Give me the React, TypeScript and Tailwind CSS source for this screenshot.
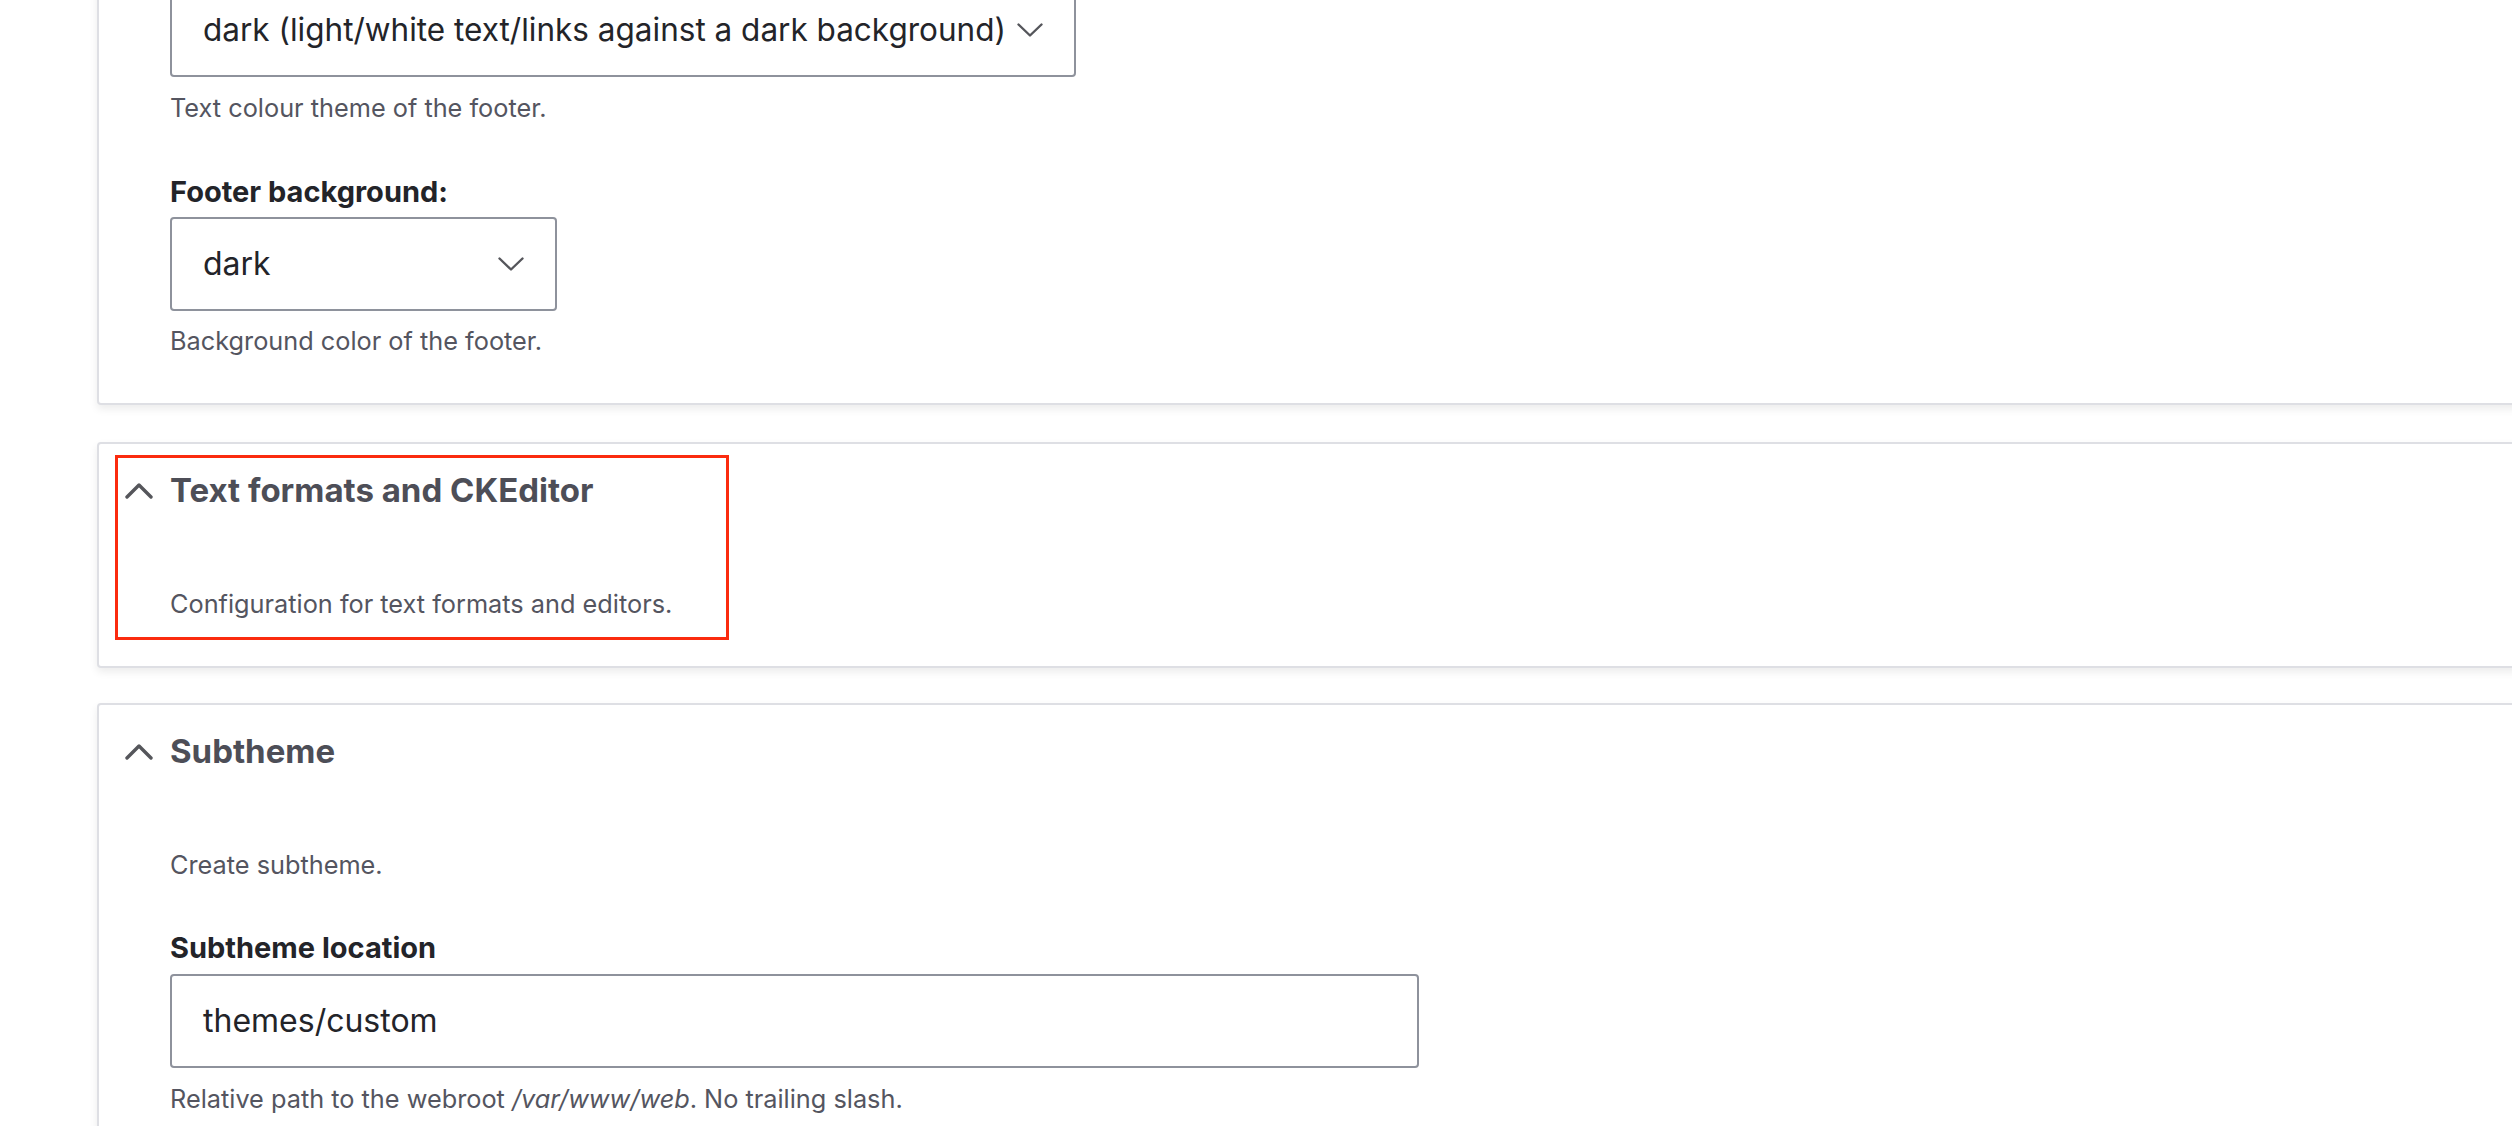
import React from "react";

const font = { fontFamily: "Inter, 'Noto Sans', sans-serif" };

function ChevronDown() {
  return (
    <svg width="26" height="14" viewBox="0 0 26 14" fill="none" className="shrink-0">
      <path d="M1.5 1.5 L13 12.5 L24.5 1.5" stroke="#55565b" strokeWidth="2.4" strokeLinecap="round" strokeLinejoin="round" />
    </svg>
  );
}

function ChevronUp() {
  return (
    <svg width="28" height="17" viewBox="0 0 28 17" fill="none" className="shrink-0">
      <path d="M2 15 L14 3 L26 15" stroke="#55565b" strokeWidth="3.4" strokeLinecap="round" strokeLinejoin="round" />
    </svg>
  );
}

function Select({ value, width, size }: { value: string; width: string; size: string }) {
  return (
    <div
      className={`flex h-[94px] items-center justify-between gap-[6px] rounded-[4px] border-2 border-[#8e929c] bg-white pl-[31px] pr-[31px] text-[#232429] ${size} ${width}`}
    >
      <span className="whitespace-nowrap">{value}</span>
      <ChevronDown />
    </div>
  );
}

function Desc({ children }: { children: React.ReactNode }) {
  return <div className="text-[25.3px] leading-[36px] text-[#545560]">{children}</div>;
}

function Label({ children }: { children: React.ReactNode }) {
  return <div className="text-[29px] font-bold leading-[40px] text-[#232429]">{children}</div>;
}

function Header({ title }: { title: string }) {
  return (
    <div className="-ml-[45px] flex items-center">
      <div className="mr-[18px] flex w-[27px] justify-center">
        <ChevronUp />
      </div>
      <div className="text-[33px] font-bold leading-[44px] text-[#4d4e57]">{title}</div>
    </div>
  );
}

export default function App() {
  return (
    <div className="h-[1126px] w-[2512px] overflow-hidden bg-white" style={font}>
      <div className="-mt-[60px] pl-[97px]">
        {/* Card 1 */}
        <div className="w-[2500px] rounded-[4px] border-2 border-[#dedfe4] bg-white pb-[44px] pl-[71px] pt-[41px] shadow-[0_4px_8px_rgba(0,0,0,0.08)]">
          <Select value="dark (light/white text/links against a dark background)" width="w-[906px]" size="text-[31.5px]" />
          <div className="mt-[13px]">
            <Desc>Text colour theme of the footer.</Desc>
          </div>
          <div className="mt-[46px]">
            <Label>Footer background:</Label>
          </div>
          <div className="mt-[5px]">
            <Select value="dark" width="w-[387px]" size="text-[32px]" />
          </div>
          <div className="mt-[12px]">
            <Desc>Background color of the footer.</Desc>
          </div>
        </div>

        {/* Card 2 */}
        <div className="relative mt-[37px] w-[2500px] rounded-[4px] border-2 border-[#dedfe4] bg-white pb-[44px] pl-[71px] pt-[24px] shadow-[0_4px_8px_rgba(0,0,0,0.08)]">
          <Header title="Text formats and CKEditor" />
          <div className="mt-[74px]">
            <Desc>Configuration for text formats and editors.</Desc>
          </div>
          <div className="absolute left-[16px] top-[11px] h-[185px] w-[614px] border-[3px] border-[#fb2b0f]" />
        </div>

        {/* Card 3 */}
        <div className="mt-[35px] w-[2500px] rounded-[4px] border-2 border-[#dedfe4] bg-white pb-[44px] pl-[71px] pt-[24px] shadow-[0_4px_8px_rgba(0,0,0,0.08)]">
          <Header title="Subtheme" />
          <div className="mt-[74px]">
            <Desc>Create subtheme.</Desc>
          </div>
          <div className="mt-[45px]">
            <Label>Subtheme location</Label>
          </div>
          <div className="mt-[6px] flex h-[94px] w-[1249px] items-center rounded-[4px] border-2 border-[#8e929c] bg-white pl-[31px] text-[32px] text-[#232429]">
            themes/custom
          </div>
          <div className="mt-[13px]">
            <Desc>
              Relative path to the webroot <em>/var/www/web</em>. No trailing slash.
            </Desc>
          </div>
        </div>
      </div>
    </div>
  );
}
